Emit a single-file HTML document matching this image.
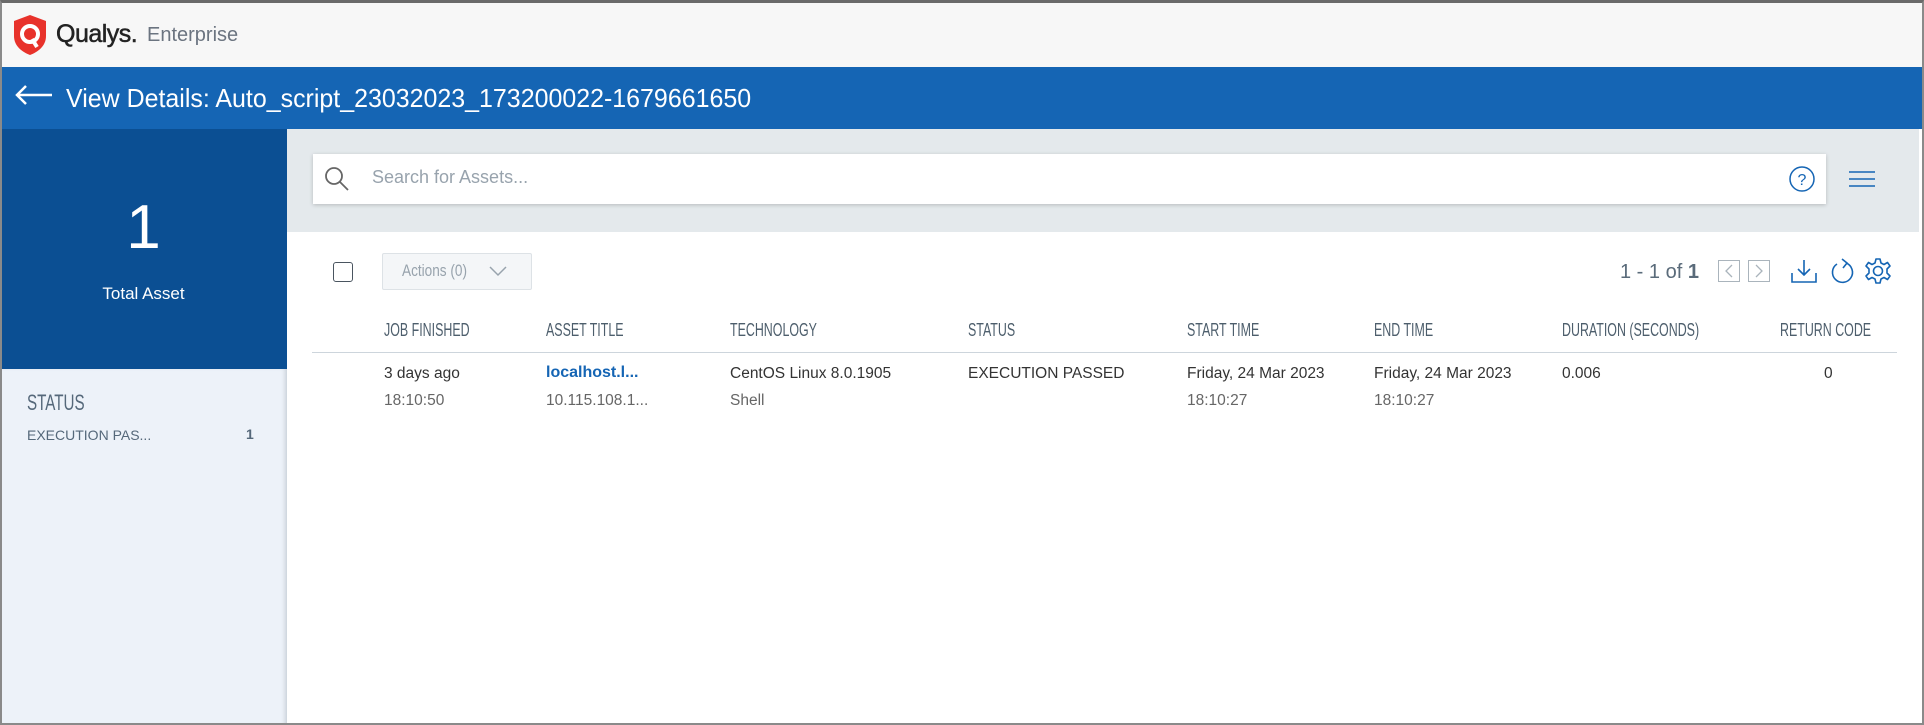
<!DOCTYPE html>
<html><head><meta charset="utf-8"><style>
*{margin:0;padding:0;box-sizing:border-box}
body{width:1924px;height:725px;overflow:hidden;background:#fff;font-family:"Liberation Sans",sans-serif;position:relative}
.a{position:absolute}
.n{transform:scaleX(0.69);transform-origin:0 0;white-space:nowrap}
</style></head><body>
<div class="a" style="left:0;top:0;width:1924px;height:725px;border:2px solid #8a8a8a;border-top:3px solid #6a6a6a;z-index:9;pointer-events:none"></div>
<div class="a" style="left:0;top:0;width:1924px;height:67px;background:#f7f7f7"></div>
<svg class="a" style="left:12px;top:14px" width="36" height="42" viewBox="0 0 36 42"><path d="M18 1 L34 7 L34 22 C34 32 26 38 18 41 C10 38 2 32 2 22 L2 7 Z" fill="#e8322b"/><circle cx="18" cy="20" r="8" fill="none" stroke="#fff" stroke-width="4"/><path d="M20 25 L25 33" stroke="#fff" stroke-width="4"/></svg>
<div class="a" style="left:56px;top:20px;font-size:25px;color:#222;letter-spacing:-0.5px;-webkit-text-stroke:0.5px #222">Qualys.</div>
<div class="a" style="left:147px;top:24px;font-size:20px;color:#6b7480">Enterprise</div>
<div class="a" style="left:0;top:67px;width:1924px;height:62px;background:#1565b4"></div>
<svg class="a" style="left:14px;top:84px" width="40" height="22" viewBox="0 0 40 22"><path d="M38 11 H3 M12 2 L3 11 L12 20" fill="none" stroke="#fff" stroke-width="2.5"/></svg>
<div class="a" style="left:66px;top:83px;font-size:26px;color:#fff;transform:scaleX(0.96);transform-origin:0 0;white-space:nowrap">View Details: Auto_script_23032023_173200022-1679661650</div>
<div class="a" style="left:0;top:129px;width:287px;height:240px;background:#0b4f93"></div>
<div class="a" style="left:0;top:369px;width:287px;height:356px;background:#edf2f9;box-shadow:inset -4px 0 4px -2px #c8d0d8"></div>
<div class="a" style="left:0;top:192px;width:287px;text-align:center;font-size:62px;color:#fff;font-weight:300">1</div>
<div class="a" style="left:0;top:284px;width:287px;text-align:center;font-size:17px;color:#fff">Total Asset</div>
<div class="a n" style="left:27px;top:390px;font-size:22px;color:#55687a">STATUS</div>
<div class="a" style="left:27px;top:427px;font-size:14px;color:#55687a">EXECUTION PAS...</div>
<div class="a" style="left:246px;top:426px;font-size:14px;color:#55687a;font-weight:bold">1</div>
<div class="a" style="left:287px;top:129px;width:1632px;height:103px;background:#e4e9ec"></div>
<div class="a" style="left:313px;top:154px;width:1513px;height:50px;background:#fff;box-shadow:0 1px 4px rgba(0,0,0,.2)"></div>
<svg class="a" style="left:323px;top:165px" width="28" height="28" viewBox="0 0 28 28"><circle cx="11" cy="11" r="8" fill="none" stroke="#666" stroke-width="1.8"/><path d="M17 17 L25 25" stroke="#666" stroke-width="1.8"/></svg>
<div class="a" style="left:372px;top:167px;font-size:18px;color:#98a3ad">Search for Assets...</div>
<svg class="a" style="left:1788px;top:165px" width="28" height="28" viewBox="0 0 28 28"><circle cx="14" cy="14" r="12" fill="none" stroke="#1565b4" stroke-width="1.5"/><text x="14" y="20" text-anchor="middle" font-size="16" fill="#1565b4" font-family="Liberation Sans">?</text></svg>
<svg class="a" style="left:1848px;top:170px" width="28" height="20" viewBox="0 0 28 20"><path d="M1 2 H27 M1 9 H27 M1 16 H27" stroke="#1565b4" stroke-width="1.5"/></svg>
<div class="a" style="left:333px;top:262px;width:20px;height:20px;border:1.5px solid #4a5560;border-radius:3px"></div>
<div class="a" style="left:382px;top:253px;width:150px;height:37px;border:1px solid #dde2e6;background:#f4f6f8;border-radius:2px"></div>
<div class="a" style="left:402px;top:261px;font-size:17px;color:#98a3ad;transform:scaleX(0.8);transform-origin:0 0;white-space:nowrap">Actions (0)</div>
<svg class="a" style="left:488px;top:264px" width="20" height="14" viewBox="0 0 20 14"><path d="M2 3 L10 11 L18 3" fill="none" stroke="#98a3ad" stroke-width="1.5"/></svg>
<div class="a" style="left:1620px;top:261px;font-size:20px;color:#5a6b7a">1 - 1 of <b>1</b></div>
<div class="a" style="left:1718px;top:260px;width:22px;height:22px;border:1px solid #aab4bc"></div>
<svg class="a" style="left:1718px;top:260px" width="22" height="22"><path d="M14 5 L8 11 L14 17" fill="none" stroke="#aab4bc" stroke-width="1.3"/></svg>
<div class="a" style="left:1748px;top:260px;width:22px;height:22px;border:1px solid #aab4bc"></div>
<svg class="a" style="left:1748px;top:260px" width="22" height="22"><path d="M8 5 L14 11 L8 17" fill="none" stroke="#aab4bc" stroke-width="1.3"/></svg>
<svg class="a" style="left:1790px;top:258px" width="28" height="26" viewBox="0 0 28 26"><path d="M14 2 V17 M8 11 L14 17 L20 11 M2 15 V24 H26 V15" fill="none" stroke="#1565b4" stroke-width="1.6"/></svg>
<svg class="a" style="left:1828px;top:256px" width="28" height="30" viewBox="0 0 28 30"><path d="M18 7 A10 10 0 1 1 9 8" fill="none" stroke="#1565b4" stroke-width="1.6"/><path d="M14 3 L19 7 L15 12" fill="none" stroke="#1565b4" stroke-width="1.6"/></svg>
<svg class="a" style="left:1864px;top:257px" width="28" height="28" viewBox="0 0 28 28"><path d="M12 2 H16 L17 6 L20 7.5 L23.5 5.5 L26 9 L23 12 L23 16 L26 19 L23.5 22.5 L20 20.5 L17 22 L16 26 H12 L11 22 L8 20.5 L4.5 22.5 L2 19 L5 16 L5 12 L2 9 L4.5 5.5 L8 7.5 L11 6 Z" fill="none" stroke="#1565b4" stroke-width="1.6" stroke-linejoin="round"/><circle cx="14" cy="14" r="4.5" fill="none" stroke="#1565b4" stroke-width="1.6"/></svg>
<div style="font-size:18px;color:#4d5e6c">
<div class="a n" style="left:384px;top:320px">JOB FINISHED</div>
<div class="a n" style="left:546px;top:320px">ASSET TITLE</div>
<div class="a n" style="left:730px;top:320px">TECHNOLOGY</div>
<div class="a n" style="left:968px;top:320px">STATUS</div>
<div class="a n" style="left:1187px;top:320px">START TIME</div>
<div class="a n" style="left:1374px;top:320px">END TIME</div>
<div class="a n" style="left:1562px;top:320px">DURATION (SECONDS)</div>
<div class="a n" style="left:1780px;top:320px">RETURN CODE</div>
</div>
<div class="a" style="left:312px;top:352px;width:1585px;height:1px;background:#cdd5dc"></div>
<div style="font-size:15.5px;color:#333">
<div class="a" style="left:384px;top:365px">3 days ago</div>
<div class="a" style="left:384px;top:392px;color:#666">18:10:50</div>
<div class="a" style="left:546px;top:364px;color:#1565b4;font-weight:bold;font-size:16px">localhost.l...</div>
<div class="a" style="left:546px;top:392px;color:#666">10.115.108.1...</div>
<div class="a" style="left:730px;top:365px">CentOS Linux 8.0.1905</div>
<div class="a" style="left:730px;top:392px;color:#666">Shell</div>
<div class="a" style="left:968px;top:365px">EXECUTION PASSED</div>
<div class="a" style="left:1187px;top:365px">Friday, 24 Mar 2023</div>
<div class="a" style="left:1187px;top:392px;color:#666">18:10:27</div>
<div class="a" style="left:1374px;top:365px">Friday, 24 Mar 2023</div>
<div class="a" style="left:1374px;top:392px;color:#666">18:10:27</div>
<div class="a" style="left:1562px;top:365px">0.006</div>
<div class="a" style="left:1824px;top:365px">0</div>
</div>
</body></html>
